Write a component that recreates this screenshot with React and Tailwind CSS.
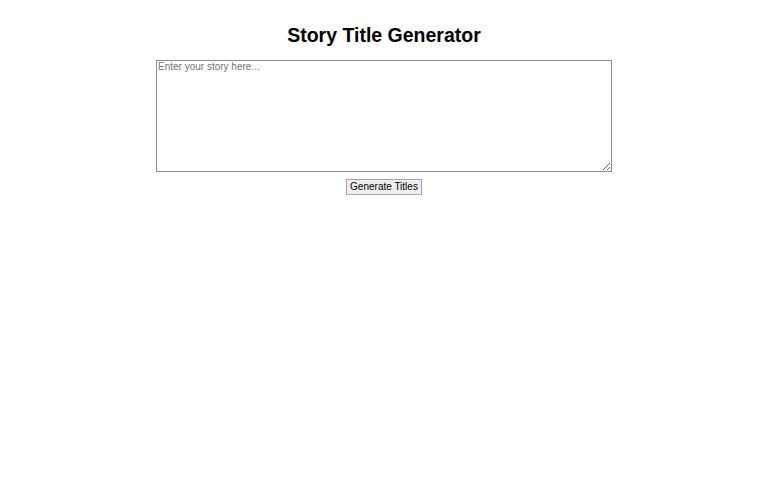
import React, { useState } from 'react';

const App = () => {
  const [story, setStory] = useState('');

  return (
    <div className="min-h-screen bg-white flex flex-col items-center font-['Liberation_Sans',Arial,sans-serif]">
      <h1 className="mt-[23px] mb-[13px] text-[19.5px] leading-[24px] font-bold text-black">Story Title Generator</h1>
      <textarea
        placeholder="Enter your story here..."
        value={story}
        onChange={(e) => setStory(e.target.value)}
        className="w-[456px] h-[112px] border border-[#8f8f8f] bg-white px-[1px] py-0 text-[10px] leading-[12px] text-black placeholder-[#757575] resize-y focus:outline-none"
      />
      <button className="mt-[7px] h-[16px] px-[3.5px] border border-[#a6a6a6] bg-[#efefef] text-[10px] leading-[12px] text-black">
        Generate Titles
      </button>
    </div>
  );
};

export default App;
